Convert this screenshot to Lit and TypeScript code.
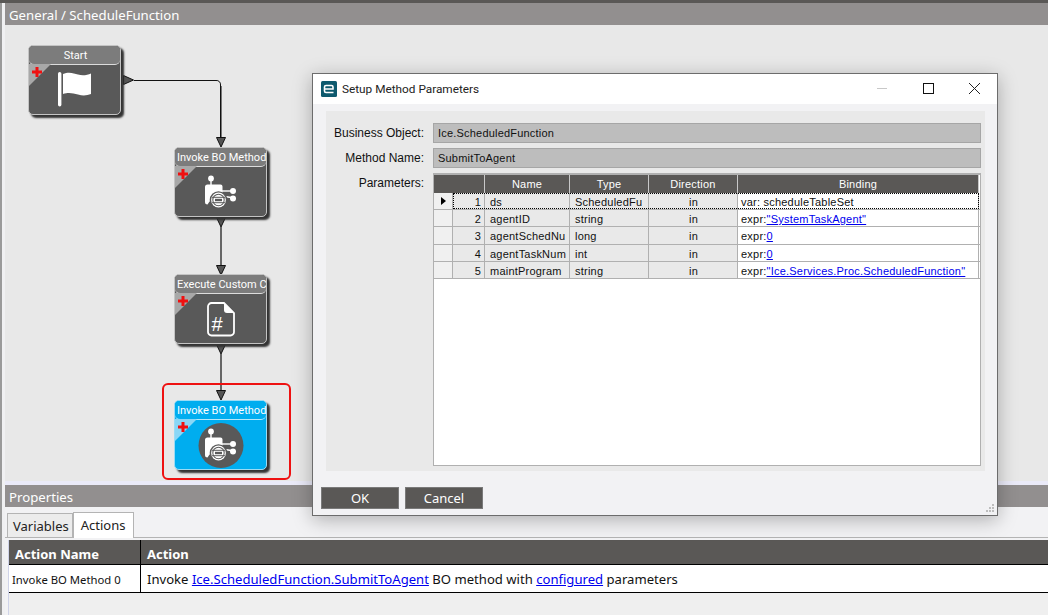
import { LitElement, html, css, svg } from "lit";
import { customElement } from "lit/decorators.js";

const boIcon = (dark: boolean) => {
  const bg = "#595959";
  return svg`
  <svg viewBox="0 0 46 46" width="46" height="46">
    ${dark ? svg`<circle cx="23" cy="22.500" r="22.500" fill="#595959"/>` : ""}
    <circle cx="13" cy="8.500" r="2.900" fill="#fff"/>
    <rect x="12.300" y="10" width="1.400" height="5" fill="#fff"/>
    <path d="M9.500 14.500h13a2 2 0 0 1 2 2v15h-13l-2 3a2.500 2.500 0 0 1-2.500-2.500v-15a2.500 2.500 0 0 1 2.500-2.500z" fill="#fff"/>
    <rect x="24" y="20.300" width="9" height="1.400" fill="#fff"/>
    <path d="M27 26.500l6 1" stroke="#fff" stroke-width="1.400"/>
    <circle cx="35" cy="21" r="3" fill="#fff"/>
    <circle cx="35" cy="28.500" r="3" fill="#fff"/>
    <circle cx="20.500" cy="30" r="8.800" fill=${bg}/>
    <circle cx="20.500" cy="30" r="7.400" fill="#fff"/>
    <circle cx="20.500" cy="30" r="6.200" fill=${bg}/>
    <circle cx="20.500" cy="30" r="5.200" fill="#fff"/>
    <rect x="14" y="26.800" width="13" height="1" fill=${bg}/>
    <rect x="14" y="32.200" width="13" height="1" fill=${bg}/>
    <rect x="17" y="28.800" width="7" height="2.400" fill=${bg}/>
  </svg>`;
};

const flagIcon = svg`
  <svg viewBox="0 0 36 38" width="36" height="38">
    <rect x="2" y="1" width="3.400" height="34.500" rx="1.700" fill="#fff"/>
    <path d="M7 3c6-2.500 11-.6 15 .6 4 1.100 9 .8 13-1.100v20.500c-4 1.600-8 2-13 .6-5-1.300-9-2.600-15-.6z" fill="#fff"/>
  </svg>`;

const fileIcon = svg`
  <svg viewBox="0 0 28 35" width="28" height="35">
    <path d="M4.500 1H17l10 10v19a3.500 3.500 0 0 1-3.500 3.500H4.500A3.500 3.500 0 0 1 1 30V4.500A3.500 3.500 0 0 1 4.500 1z" fill="none" stroke="#fff" stroke-width="1.800"/>
    <path d="M17 1v7a3 3 0 0 0 3 3h7z" fill="#fff"/>
    <text x="10" y="29" text-anchor="middle" font-family="Liberation Sans, sans-serif" font-size="20" fill="#fff">#</text>
  </svg>`;

const rows = [
  { n: 1, name: "ds", type: "ScheduledFu", dir: "in", prefix: "var: scheduleTableSet", link: "" },
  { n: 2, name: "agentID", type: "string", dir: "in", prefix: "expr:", link: '"SystemTaskAgent"' },
  { n: 3, name: "agentSchedNu", type: "long", dir: "in", prefix: "expr:", link: "0" },
  { n: 4, name: "agentTaskNum", type: "int", dir: "in", prefix: "expr:", link: "0" },
  { n: 5, name: "maintProgram", type: "string", dir: "in", prefix: "expr:", link: '"Ice.Services.Proc.ScheduledFunction"' },
];

@customElement("app-root")
export class AppRoot extends LitElement {
  static styles = css`
    :host { display: block; position: relative; width: 1048px; height: 615px; overflow: hidden; background: #f2f2f4; font-family: "Noto Sans", sans-serif; color: #111; }
    a { color: #0000ee; text-decoration: underline; }
    .top { height: 3px; background: #5a5856; }
    .main { display: flex; height: 612px; }
    .rail { width: 5px; box-sizing: border-box; border-left: 2px solid #9a9a9a; background: #f0f0f2; }
    .content { flex: 1; display: flex; flex-direction: column; min-width: 0; }
    .bar { height: 22px; background: #928f8f; color: #fff; font-size: 13.200px; line-height: 24px; padding-left: 4px; }
    .canvas { position: relative; height: 456px; background: #e8e8e8; }
    .gap { height: 4px; background: #eaeaf8; }
    .tabs { display: flex; align-items: flex-end; height: 31px; padding-left: 2px; background: #f2f2f4; box-sizing: border-box; border-bottom: 1px solid #b4b4b4; }
    .tab { font-size: 13px; height: 24px; line-height: 25px; padding: 0 3px 0 5px; box-sizing: border-box; border: 1px solid #b4b4b4; border-bottom: 0; background: #ececec; color: #222; }
    .tab.on { height: 26px; background: #fff; padding: 0 7px; margin-bottom: -1px; line-height: 24px; }
    .grid-wrap { margin-left: 3px; margin-top: 2px; flex: 1; border-left: 1px solid #cfd3e8; background: #efefef; }
    .thead { display: flex; height: 25px; background: #5a5856; color: #fff; font-weight: 700; font-size: 13px; line-height: 28px; border-bottom: 1px solid #000; box-sizing: border-box; }
    .trow { display: flex; height: 28px; box-sizing: border-box; background: #fff; font-size: 13.100px; line-height: 29px; border-bottom: 1px solid #000; }
    .c1 { width: 132px; box-sizing: border-box; padding-left: 3px; border-right: 1px solid #000; flex: none; }
    .thead .c1 { padding-left: 6px; }
    .c2 { padding-left: 6px; white-space: nowrap; }
    .trow .c1 { font-size: 11.300px; padding-left: 3px; }
    .node { position: absolute; width: 93px; height: 70px; box-sizing: border-box; border-radius: 5px; background: #595959; border: 1px solid #c4c4c4; box-shadow: 3px 3px 2px #333; color: #fff; overflow: hidden; }
    .node.active { background: #00adef; border-color: #9adcf5; }
    .ntitle { height: 19px; box-sizing: border-box; background: #7c7c7c; border-bottom: 1px solid #dcdcdc; border-radius: 0 0 5px 5px; font-family: Roboto, sans-serif; font-size: 11px; line-height: 20px; text-align: center; white-space: nowrap; overflow: hidden; padding: 0 0 0 2px; }
    .active .ntitle { background: #00adef; border-color: #b6e8fa; }
    .corner { position: absolute; left: 0; top: 18px; width: 0; height: 0; border-top: 22px solid #a8a8a8; border-right: 22px solid transparent; }
    .active .corner { border-top-color: #8ad7f6; }
    .plus { position: absolute; left: 3px; top: 21px; width: 10px; height: 10px; }
    .flag, .bo, .file { position: absolute; }
    .flag svg, .bo svg, .file svg { display: block; }
    .flag { left: 27px; top: 25px; }
    .bo { left: 23px; top: 22px; }
    .file { left: 32px; top: 27px; }
    .wires { position: absolute; left: -5px; top: -25px; pointer-events: none; }
    .redbox { position: absolute; left: 157px; top: 358px; width: 129px; height: 97px; box-sizing: border-box; border: 2px solid #ee1111; border-radius: 6px; }
    .dialog { position: absolute; left: 312px; top: 73px; width: 686px; height: 443px; box-sizing: border-box; border: 1px solid #6c6c6c; background: #f2f2f4; box-shadow: 0 4px 18px rgba(0,0,0,.28); display: flex; flex-direction: column; }
    .dtitle { height: 30px; flex: none; background: #fff; display: flex; align-items: center; padding-left: 8px; gap: 5px; font-family: Roboto, sans-serif; font-size: 11.800px; color: #222; }
    .winbtns { margin-left: auto; display: flex; }
    .winbtns svg { display: block; width: 46px; height: 30px; }
    .panel { margin: 7px 12px 0 13px; height: 360px; flex: none; box-sizing: border-box; background: #e9e9e9; padding: 12px 4px 5px 0; display: grid; grid-template-columns: 98px 1fr; column-gap: 9px; row-gap: 5px; grid-template-rows: 20px 20px 1fr; font-family: "Liberation Sans", sans-serif; font-size: 12px; }
    .lab { text-align: right; line-height: 20px; color: #111; }
    .field { background: #bdbdbd; border: 1px solid #a6a6a6; box-sizing: border-box; line-height: 18px; padding-left: 4px; font-size: 11px; letter-spacing: .2px; }
    .pgrid { background: #fff; border: 1px solid #b0b0b0; border-top-width: 2px; box-sizing: border-box; font-size: 11px; letter-spacing: .22px; }
    .phead { display: flex; height: 18px; background: #5a5856; color: #fff; margin-right: 1px; }
    .phead div { box-sizing: border-box; border-right: 1px solid #c8c8c8; text-align: center; line-height: 18px; flex: none; }
    .prow { display: flex; height: 16.200px; border-bottom: 1px solid #b0b0b0; line-height: 18px; position: relative; }
    .prow > div { box-sizing: border-box; flex: none; border-right: 1px solid #b0b0b0; background: #e9e9e9; white-space: nowrap; overflow: hidden; }
    .prow > .rh { width: 19px; background: #f0f0f0; position: relative; }
    .rh i { position: absolute; left: 7px; top: 4px; border-left: 5px solid #000; border-top: 4px solid transparent; border-bottom: 4px solid transparent; }
    .num { width: 32px; text-align: right; padding-right: 3px; }
    .nm { width: 85px; padding-left: 5px; }
    .ty { width: 79px; padding-left: 5px; }
    .di { width: 89px; text-align: center; padding-left: 1px; }
    .prow > .bi { width: 241px; background: #fff; padding-left: 3px; }
    .prow > .bi a { letter-spacing: .22px; }
    .focus { position: absolute; left: 19px; right: 1px; top: 0; bottom: 0; border: 1px dotted #000; box-sizing: border-box; }
    .dbtns { display: flex; gap: 6px; padding: 16px 0 0 8px; }
    .dbtn { width: 78px; height: 22px; background: #5a5856; color: #fff; border: 1px solid #7a7a7a; box-sizing: border-box; font-size: 13px; line-height: 20px; text-align: center; }
    .grip { position: absolute; right: 2px; bottom: 2px; }
    .h1 { width: 51px; } .h2 { width: 85px; } .h3 { width: 79px; } .h4 { width: 89px; } .h5 { width: 241px; }
  `;

  private node(x: number, y: number, title: string, icon: unknown, active = false) {
    return html`<div class="node ${active ? "active" : ""}" style="left:${x - 6}px;top:${y - 26}px">
      <div class="ntitle">${title}</div>
      <div class="corner"></div>
      <svg class="plus" viewBox="0 0 10 10"><path d="M3.500 0h3v3.500H10v3H6.500V10h-3V6.500H0v-3h3.500z" fill="#f01010"/></svg>
      ${icon}
    </div>`;
  }

  private wires() {
    const tri = (d: string) => svg`<path d=${d} fill="#555" stroke="#111" stroke-width="1"/>`;
    return svg`<svg class="wires" width="400" height="500" viewBox="0 0 400 500" fill="none">
      <path d="M134 80.500H216a4 4 0 0 1 4.500 4.500V138" stroke="#111" stroke-width="1"/>
      <path d="M221.500 86V138" stroke="#777" stroke-width="1"/>
      <path d="M221 227V266M221 354V391" stroke="#666" stroke-width="2"/>
      ${tri("M123.500 75.500L133.500 80L123.500 84.500Z")}
      ${tri("M216.500 137.500H225.500L221 147Z")}
      ${tri("M216.500 217.500H225.500L221 227Z")}
      ${tri("M216.500 265.500H225.500L221 275Z")}
      ${tri("M216.500 344.500H225.500L221 354Z")}
      ${tri("M216.500 390.500H225.500L221 400Z")}
    </svg>`;
  }

  render() {
    return html`
      <div class="top"></div>
      <div class="main">
        <div class="rail"></div>
        <div class="content">
          <div class="bar">General / ScheduleFunction</div>
          <div class="canvas">
            ${this.wires()}
            <div class="redbox"></div>
            ${this.node(29, 46, "Start", html`<div class="flag">${flagIcon}</div>`)}
            ${this.node(175, 148, "Invoke BO Method", html`<div class="bo">${boIcon(false)}</div>`)}
            ${this.node(175, 275, "Execute Custom Code", html`<div class="file">${fileIcon}</div>`)}
            ${this.node(175, 401, "Invoke BO Method", html`<div class="bo">${boIcon(true)}</div>`, true)}
          </div>
          <div class="gap"></div>
          <div class="bar">Properties</div>
          <div class="tabs">
            <div class="tab">Variables</div>
            <div class="tab on">Actions</div>
          </div>
          <div class="grid-wrap">
            <div class="thead"><div class="c1">Action Name</div><div class="c2">Action</div></div>
            <div class="trow">
              <div class="c1">Invoke BO Method 0</div>
              <div class="c2">Invoke <a>Ice.ScheduledFunction.SubmitToAgent</a> BO method with <a>configured</a> parameters</div>
            </div>
          </div>
        </div>
      </div>
      <div class="dialog">
        <div class="dtitle">
          <svg width="16" height="16" viewBox="0 0 16 16"><rect width="16" height="16" rx="1.500" fill="#0e5a6e"/><path d="M3.500 8H12V6a1.500 1.500 0 0 0-1.500-1.500H5A1.500 1.500 0 0 0 3.500 6v4A1.500 1.500 0 0 0 5 11.500h7.500" fill="none" stroke="#fff" stroke-width="1.600"/></svg>
          <span>Setup Method Parameters</span>
          <div class="winbtns">
            <svg viewBox="0 0 46 30"><path d="M18 14.500h10" stroke="#c8c8c8"/></svg>
            <svg viewBox="0 0 46 30"><rect x="18.500" y="9.500" width="10" height="10" fill="none" stroke="#111"/></svg>
            <svg viewBox="0 0 46 30"><path d="M18 9l11 11M29 9L18 20" stroke="#222"/></svg>
          </div>
        </div>
        <div class="panel">
          <div class="lab">Business Object:</div><div class="field">Ice.ScheduledFunction</div>
          <div class="lab">Method Name:</div><div class="field">SubmitToAgent</div>
          <div class="lab">Parameters:</div>
          <div class="pgrid">
            <div class="phead">
              <div class="h1"></div><div class="h2">Name</div><div class="h3">Type</div><div class="h4">Direction</div><div class="h5">Binding</div>
            </div>
            ${rows.map(r => html`<div class="prow">
              <div class="rh">${r.n === 1 ? html`<i></i>` : ""}</div>
              <div class="num">${r.n}</div>
              <div class="nm">${r.name}</div>
              <div class="ty">${r.type}</div>
              <div class="di">${r.dir}</div>
              <div class="bi">${r.prefix}${r.link ? html`<a>${r.link}</a>` : ""}</div>
              ${r.n === 1 ? html`<span class="focus"></span>` : ""}
            </div>`)}
          </div>
        </div>
        <div class="dbtns"><div class="dbtn">OK</div><div class="dbtn">Cancel</div></div>
        <svg class="grip" width="10" height="10" viewBox="0 0 10 10" fill="#bdbdbd"><rect x="7" y="1" width="2" height="2"/><rect x="4" y="4" width="2" height="2"/><rect x="7" y="4" width="2" height="2"/><rect x="1" y="7" width="2" height="2"/><rect x="4" y="7" width="2" height="2"/><rect x="7" y="7" width="2" height="2"/></svg>
      </div>
    `;
  }
}
